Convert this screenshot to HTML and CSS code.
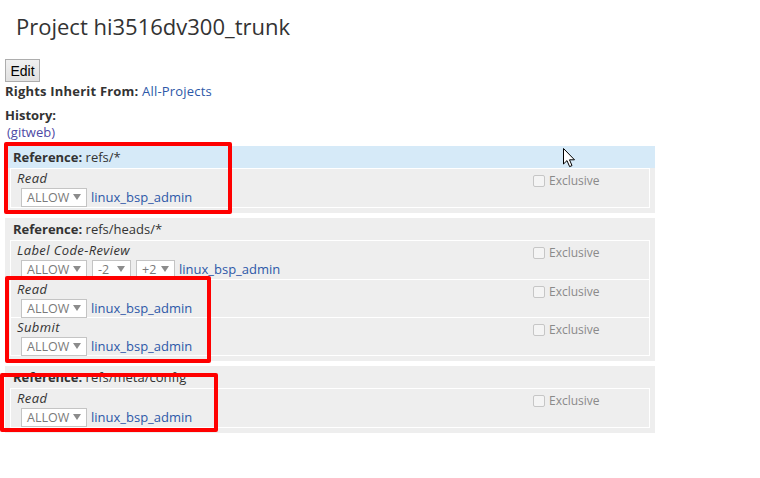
FILE: index.html
```html
<!DOCTYPE html>
<html>
<head>
<meta charset="utf-8">
<link rel="stylesheet" href="styles.css">
</head>
<body>
<div class="page">
  <h1 class="title">Project hi3516dv300_trunk</h1>
  <button class="btn" type="button">Edit</button>
  <div class="info"><b>Rights Inherit From:</b> <a class="link" href="#">All-Projects</a></div>
  <div class="history">
    <div class="hist-label"><b>History:</b></div>
    <div class="gitweb"><a class="link visited" href="#">(gitweb)</a></div>
  </div>

  <div class="sections">
    <section class="ref">
      <div class="ref-head hl"><b>Reference:</b> refs/*</div>
      <div class="perms">
        <div class="perm">
          <div class="perm-top"><span class="perm-name">Read</span><label class="excl"><span class="cb"></span>Exclusive</label></div>
          <div class="rule"><span class="sel w-allow">ALLOW<span class="arr"></span></span><a class="link" href="#">linux_bsp_admin</a></div>
        </div>
      </div>
    </section>

    <section class="ref">
      <div class="ref-head"><b>Reference:</b> refs/heads/*</div>
      <div class="perms">
        <div class="perm">
          <div class="perm-top"><span class="perm-name">Label Code-Review</span><label class="excl"><span class="cb"></span>Exclusive</label></div>
          <div class="rule"><span class="sel w-allow">ALLOW<span class="arr"></span></span><span class="sel w-num">-2<span class="arr"></span></span><span class="sel w-num">+2<span class="arr"></span></span><a class="link" href="#">linux_bsp_admin</a></div>
        </div>
        <div class="perm">
          <div class="perm-top"><span class="perm-name">Read</span><label class="excl"><span class="cb"></span>Exclusive</label></div>
          <div class="rule"><span class="sel w-allow">ALLOW<span class="arr"></span></span><a class="link" href="#">linux_bsp_admin</a></div>
        </div>
        <div class="perm">
          <div class="perm-top"><span class="perm-name">Submit</span><label class="excl"><span class="cb"></span>Exclusive</label></div>
          <div class="rule"><span class="sel w-allow">ALLOW<span class="arr"></span></span><a class="link" href="#">linux_bsp_admin</a></div>
        </div>
      </div>
    </section>

    <section class="ref">
      <div class="ref-head"><b>Reference:</b> refs/meta/config</div>
      <div class="perms">
        <div class="perm">
          <div class="perm-top"><span class="perm-name">Read</span><label class="excl"><span class="cb"></span>Exclusive</label></div>
          <div class="rule"><span class="sel w-allow">ALLOW<span class="arr"></span></span><a class="link" href="#">linux_bsp_admin</a></div>
        </div>
      </div>
    </section>
  </div>

  <div class="mark mark1"></div>
  <div class="mark mark2"></div>
  <div class="mark mark3"></div>

  <svg class="cursor" width="13" height="20" viewBox="0 0 13 20">
    <path d="M0.5 0.5 L0.5 16 L4 12.6 L6.6 18.6 L9 17.6 L6.5 11.8 L11.5 11.8 Z" fill="#fff" stroke="#000" stroke-width="1" stroke-linejoin="miter"/>
  </svg>
</div>
</body>
</html>
```

FILE: styles.css
```css
html, body {
  margin: 0;
  padding: 0;
  background: #fff;
}
body {
  font-family: "Open Sans", "Noto Sans", sans-serif;
  font-size: 13px;
  color: #333;
}
.page {
  position: relative;
  width: 760px;
  height: 478px;
  padding: 0 5px;
  box-sizing: border-box;
}
.title {
  margin: 0;
  padding: 10px 0 0 11px;
  font-size: 22px;
  font-weight: normal;
  line-height: 32px;
  color: #333;
  letter-spacing: 0;
}
.btn {
  display: block;
  margin-top: 17px;
  height: 23px;
  width: 35px;
  padding: 0;
  font-family: "Liberation Sans", Arial, sans-serif;
  font-size: 14px;
  color: #000;
  background: linear-gradient(#f0f0f0, #e1e1e1);
  border: 1px solid #adadad;
  border-radius: 0;
}
.info {
  margin-top: 1px;
  line-height: 17px;
  letter-spacing: 0.2px;
}
.history {
  margin-top: 7px;
}
.hist-label {
  line-height: 17px;
}
.gitweb {
  padding-left: 2px;
  line-height: 17px;
}
b {
  font-weight: bold;
  color: #333;
}
.link {
  color: #2d58a8;
  text-decoration: none;
}
.link.visited {
  color: #4e4aa5;
}
.sections {
  margin-top: 5px;
  width: 650px;
  display: flex;
  flex-direction: column;
  gap: 5px;
}
.ref {
  background: #eeeeee;
  padding-bottom: 5px;
}
.ref-head {
  height: 22px;
  line-height: 22px;
  padding-left: 8px;
}
.ref-head.hl {
  background: #d6eaf8;
}
.perms {
  margin: 0 5px;
  border: 1px solid #fff;
}
.perm {
  box-sizing: border-box;
  height: 38px;
  padding-left: 6px;
}
.perm + .perm {
  border-top: 1px solid #fff;
}
.perm-top {
  display: flex;
  height: 18px;
  line-height: 18px;
}
.perm-name {
  flex: 0 0 516px;
  font-style: italic;
  letter-spacing: 0.4px;
}
.excl {
  display: flex;
  align-items: center;
  gap: 4px;
  color: #8a8a8a;
  font-size: 12px;
  padding-top: 5px;
}
.cb {
  display: inline-block;
  width: 10px;
  height: 10px;
  border: 1px solid #c6c6c6;
  border-radius: 2px;
  background: #f4f4f4;
}
.rule {
  display: flex;
  align-items: center;
  gap: 5px;
  height: 20px;
  padding-left: 4px;
}
.sel {
  box-sizing: border-box;
  height: 19px;
  line-height: 17px;
  border: 1px solid #c4c4c4;
  background: #fff;
  color: #7a7a7a;
  font-size: 12.5px;
  padding: 0 5px 0 5px;
  display: flex;
  align-items: center;
  justify-content: space-between;
}
.w-allow { width: 66px; }
.w-num { width: 39px; }
.arr {
  width: 0;
  height: 0;
  border-left: 4px solid transparent;
  border-right: 4px solid transparent;
  border-top: 6px solid #8c8c8c;
}
.rule .link {
  margin-left: -1px;
}
.mark {
  position: absolute;
  border: 4px solid #f00;
  box-sizing: border-box;
  border-radius: 2px;
}
.mark1 { left: 4px; top: 142px; width: 228px; height: 72px; }
.mark2 { left: 5px; top: 276px; width: 206px; height: 87px; }
.mark3 { left: 0; top: 373px; width: 218px; height: 59px; }
.cursor {
  position: absolute;
  left: 563px;
  top: 148px;
}
```
